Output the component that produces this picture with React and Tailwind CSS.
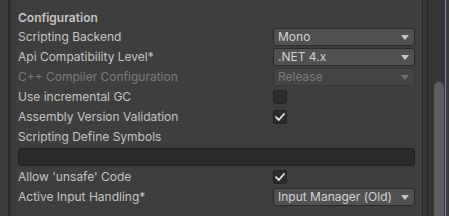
import React from 'react';

const font = { fontFamily: 'Inter, "Noto Sans", sans-serif' };

const Arrow = ({ dim }) => (
    <svg width="8" height="5" viewBox="0 0 8 5" className="shrink-0">
        <path d="M0 0 H8 L4 5 Z" fill={dim ? '#6e6e6e' : '#c4c4c4'} />
    </svg>
);

const Dropdown = ({ value, disabled }) => (
    <div
        className={`w-[142px] h-[18px] flex items-center justify-between pl-[4px] pr-[5px] rounded-[3px] border ${disabled ? 'bg-[#444444] border-[#393939] text-[#7b7b7b]' : 'bg-[#515151] border-[#2b2b2b] text-[#d2d2d2]'}`}
    >
        <span className="leading-none">{value}</span>
        <Arrow dim={disabled} />
    </div>
);

const Check = ({ checked }) => (
    <div className="w-[14px] h-[14px] rounded-[2px] bg-[#2c2c2c] border border-[#222222] flex items-center justify-center">
        {checked && (
            <svg width="10" height="8" viewBox="0 0 10 8">
                <path d="M1 4.2 L3.8 7 L9 1" stroke="#e4e4e4" strokeWidth="1.8" fill="none" strokeLinecap="round" strokeLinejoin="round" />
            </svg>
        )}
    </div>
);

const Row = ({ label, dim, children }) => (
    <div className="h-5 flex items-center">
        <span className={`w-[255px] shrink-0 ${dim ? 'text-[#7b7b7b]' : 'text-[#c4c4c4]'}`}>{label}</span>
        {children}
    </div>
);

export default function App() {
    return (
        <div className="w-[449px] h-[216px] overflow-hidden flex bg-[#3e3e3e] text-[12px]" style={font}>
            {/* left gutter */}
            <div className="w-[8px] shrink-0 bg-[#3c3c3c]" />
            <div className="w-px shrink-0 bg-[#282828]" />
            <div className="w-px shrink-0 bg-[#353535]" />
            <div className="w-px shrink-0 bg-[#2a2a2a]" />

            {/* inspector body */}
            <div className="flex-1 pl-[7px] pr-[7px] pt-2">
                <div className="h-[19px] flex items-center font-semibold text-[#c4c4c4]">Configuration</div>
                <Row label="Scripting Backend"><Dropdown value="Mono" /></Row>
                <Row label="Api Compatibility Level*"><Dropdown value=".NET 4.x" /></Row>
                <Row label="C++ Compiler Configuration" dim><Dropdown value="Release" disabled /></Row>
                <Row label="Use incremental GC"><Check /></Row>
                <Row label="Assembly Version Validation"><Check checked /></Row>
                <Row label="Scripting Define Symbols" />
                <div className="h-5 flex items-center">
                    <div className="w-full h-[18px] rounded-[3px] bg-[#2a2a2a] border border-[#212121]" />
                </div>
                <Row label="Allow 'unsafe' Code"><Check checked /></Row>
                <Row label="Active Input Handling*"><Dropdown value="Input Manager (Old)" /></Row>
            </div>

            {/* right edge + scrollbar */}
            <div className="w-px shrink-0 bg-[#262626]" />
            <div className="w-[4px] shrink-0 bg-[#393939]" />
            <div className="w-px shrink-0 bg-[#262626]" />
            <div className="w-[17px] shrink-0 bg-[#363636] flex flex-col pt-[82px] pl-[6px] pr-[1px]">
                <div className="flex-1 rounded-t-full bg-[#5e5e5e] -mb-4" />
            </div>
            <div className="w-px shrink-0 bg-[#7d7dd6]" />
            <div className="w-[3px] shrink-0 bg-[#3a3a3a]" />
        </div>
    );
}
